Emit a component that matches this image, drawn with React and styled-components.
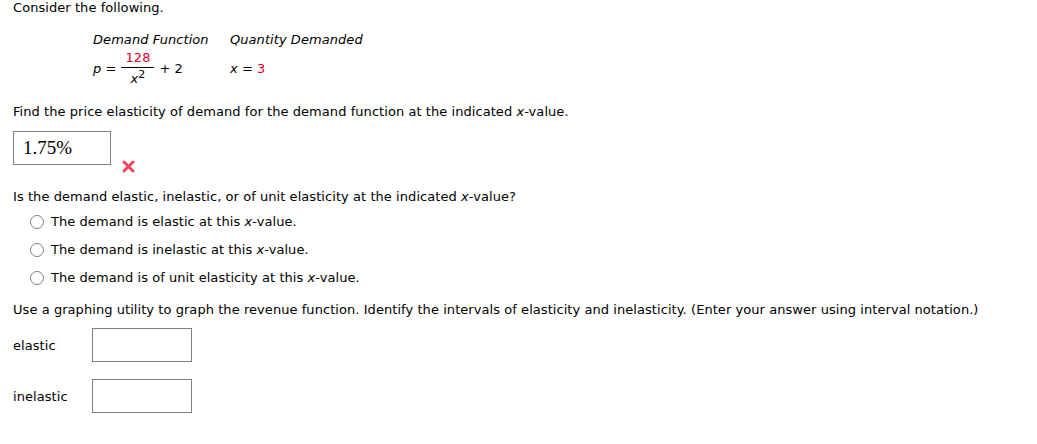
import React from "react";
import styled, { createGlobalStyle } from "styled-components";

const Global = createGlobalStyle`
  html, body { margin: 0; padding: 0; background: #fff; }
  body { font-family: "DejaVu Sans", Verdana, sans-serif; font-size: 13px; color: #000; letter-spacing: 0.06px; }
`;

const Page = styled.div`
  padding: 0 13px;
`;

const P = styled.div`
  line-height: 16px;
  margin-top: ${(p) => p.$mt || 0}px;
`;

const Table = styled.div`
  display: grid;
  grid-template-columns: 137px auto;
  margin: 16px 0 0 80px;
  row-gap: 2px;
`;

const Head = styled.div`
  font-style: italic;
  line-height: 16px;
`;

const Cell = styled.div`
  display: flex;
  align-items: center;
  gap: 5px;
`;

const Red = styled.span`
  color: #e4002b;
`;

const Frac = styled.span`
  display: inline-flex;
  flex-direction: column;
  align-items: center;
  line-height: 16px;
`;

const Num = styled.span`
  color: #e4002b;
  border-bottom: 1px solid #000;
  padding: 0 4px 1px;
`;

const Den = styled.span`
  font-style: italic;
  padding-top: 3px;
`;

const Sup = styled.sup`
  font-style: normal;
  font-size: 11px;
  vertical-align: 5px;
  line-height: 0;
`;

const AnswerRow = styled.div`
  display: flex;
  align-items: flex-start;
  margin-top: 11px;
`;

const Box = styled.div`
  width: ${(p) => p.$w || 97}px;
  height: 34px;
  border: 1px solid #808080;
  box-sizing: border-box;
  font-family: "Liberation Serif", "Times New Roman", serif;
  font-size: 19px;
  letter-spacing: 0;
  display: flex;
  align-items: center;
  padding-left: 9px;
`;

const Wrong = styled.svg`
  margin: 29px 0 0 11px;
`;

const Options = styled.div`
  display: flex;
  flex-direction: column;
  gap: 12px;
  margin: 9px 0 0 17px;
`;

const Option = styled.label`
  display: flex;
  align-items: center;
  gap: 7px;
  line-height: 16px;
`;

const Radio = styled.span`
  width: 12px;
  height: 12px;
  border: 1px solid #808080;
  border-radius: 50%;
  display: inline-block;
  flex: none;
`;

const FieldRow = styled.div`
  display: grid;
  grid-template-columns: 79px auto;
  align-items: center;
  margin-top: ${(p) => p.$mt}px;
`;

export default function App() {
  return (
    <>
      <Global />
      <Page>
        <P>Consider the following.</P>
        <Table>
          <Head>Demand Function</Head>
          <Head>Quantity Demanded</Head>
          <Cell>
            <span><i>p</i> =</span>
            <Frac><Num>128</Num><Den>x<Sup>2</Sup></Den></Frac>
            <span>+ 2</span>
          </Cell>
          <Cell>
            <span><i>x</i> = <Red>3</Red></span>
          </Cell>
        </Table>
        <P $mt={17}>Find the price elasticity of demand for the demand function at the indicated <i>x</i>-value.</P>
        <AnswerRow>
          <Box $w={98}>1.75%</Box>
          <Wrong width="13" height="13" viewBox="0 0 13 13">
            <path d="M2 2 L11 11 M11 2 L2 11" stroke="#f0465b" strokeWidth="3" strokeLinecap="round" />
          </Wrong>
        </AnswerRow>
        <P $mt={16}>Is the demand elastic, inelastic, or of unit elasticity at the indicated <i>x</i>-value?</P>
        <Options>
          <Option><Radio /><span>The demand is elastic at this <i>x</i>-value.</span></Option>
          <Option><Radio /><span>The demand is inelastic at this <i>x</i>-value.</span></Option>
          <Option><Radio /><span>The demand is of unit elasticity at this <i>x</i>-value.</span></Option>
        </Options>
        <P $mt={16}>Use a graphing utility to graph the revenue function. Identify the intervals of elasticity and inelasticity. (Enter your answer using interval notation.)</P>
        <FieldRow $mt={10}><span>elastic</span><Box $w={100} /></FieldRow>
        <FieldRow $mt={17}><span>inelastic</span><Box $w={100} /></FieldRow>
      </Page>
    </>
  );
}
